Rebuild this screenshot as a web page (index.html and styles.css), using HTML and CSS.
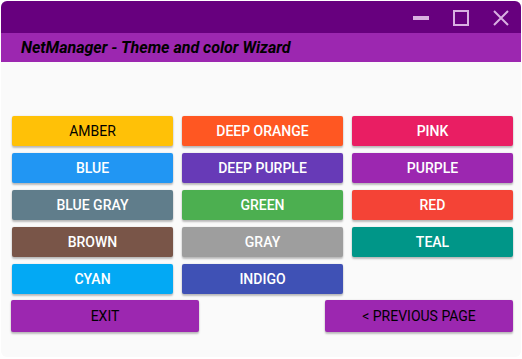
FILE: index.html
```html
<!DOCTYPE html>
<html lang="en">
<head>
	<meta charset="UTF-8">
	<title>NetManager - Theme and color Wizard</title>
	<link rel="stylesheet" href="styles.css">
</head>
<body>
	<div class="window">
		<div class="titlebar">
			<svg class="ctl" width="16" height="16" viewBox="0 0 16 16"><rect x="0" y="6" width="16" height="4" fill="#d9b0e2"/></svg>
			<svg class="ctl" width="16" height="16" viewBox="0 0 16 16"><rect x="1" y="1" width="14" height="14" fill="none" stroke="#d9b0e2" stroke-width="2"/></svg>
			<svg class="ctl" width="16" height="16" viewBox="0 0 16 16"><path d="M1 1 L15 15 M15 1 L1 15" stroke="#d9b0e2" stroke-width="2"/></svg>
		</div>
		<div class="header">NetManager - Theme and color Wizard</div>
		<div class="content">
			<div class="grid">
				<button class="amber">AMBER</button>
				<button class="deep-orange">DEEP ORANGE</button>
				<button class="pink">PINK</button>
				<button class="blue">BLUE</button>
				<button class="deep-purple">DEEP PURPLE</button>
				<button class="purple">PURPLE</button>
				<button class="blue-gray">BLUE GRAY</button>
				<button class="green">GREEN</button>
				<button class="red">RED</button>
				<button class="brown">BROWN</button>
				<button class="gray">GRAY</button>
				<button class="teal">TEAL</button>
				<button class="cyan">CYAN</button>
				<button class="indigo">INDIGO</button>
			</div>
			<div class="actions">
				<button class="action">EXIT</button>
				<button class="action">&lt; PREVIOUS PAGE</button>
			</div>
		</div>
	</div>
</body>
</html>
```
FILE: styles.css
```css
html, body {
	margin: 0;
	padding: 0;
	background: #fff;
}
body {
	padding: 1px 1px 2px 1px;
	font-family: Roboto, "Liberation Sans", sans-serif;
}
.window {
	width: 520px;
	height: 356px;
	background: #fafafa;
	border-radius: 6px;
	overflow: hidden;
	display: flex;
	flex-direction: column;
}
.titlebar {
	height: 32px;
	background: #67007e;
	display: flex;
	justify-content: flex-end;
	align-items: center;
	gap: 24px;
	padding-right: 12px;
	padding-top: 1px;
	box-sizing: border-box;
}
.header {
	height: 29px;
	background: #9c27b0;
	color: #000;
	font-style: italic;
	font-weight: 700;
	font-size: 16px;
	line-height: 29px;
	padding-left: 20px;
}
.content {
	padding: 54px 8px 0 10px;
}
.grid {
	display: grid;
	grid-template-columns: repeat(3, 161px);
	grid-auto-rows: 30px;
	column-gap: 9px;
	row-gap: 7px;
	padding-left: 1px;
}
button {
	border: none;
	border-radius: 2px;
	font-family: Roboto, "Liberation Sans", sans-serif;
	font-size: 14px;
	font-weight: 500;
	color: #fff;
	padding: 0;
	box-shadow: 0 2px 2px rgba(0, 0, 0, 0.24), 0 0 2px rgba(0, 0, 0, 0.12);
}
.amber { background: #ffc107; color: #000; font-weight: 400; }
.deep-orange { background: #ff5722; }
.pink { background: #e91e63; }
.blue { background: #2196f3; }
.deep-purple { background: #673ab7; }
.purple { background: #9c27b0; }
.blue-gray { background: #607d8b; }
.green { background: #4caf50; }
.red { background: #f44336; }
.brown { background: #795548; }
.gray { background: #9e9e9e; }
.teal { background: #009688; }
.cyan { background: #03a9f4; }
.indigo { background: #3f51b5; }
.actions {
	display: flex;
	justify-content: space-between;
	margin-top: 6px;
}
.action {
	width: 188px;
	height: 32px;
	background: #9c27b0;
	color: #000;
	font-weight: 400;
}
```
